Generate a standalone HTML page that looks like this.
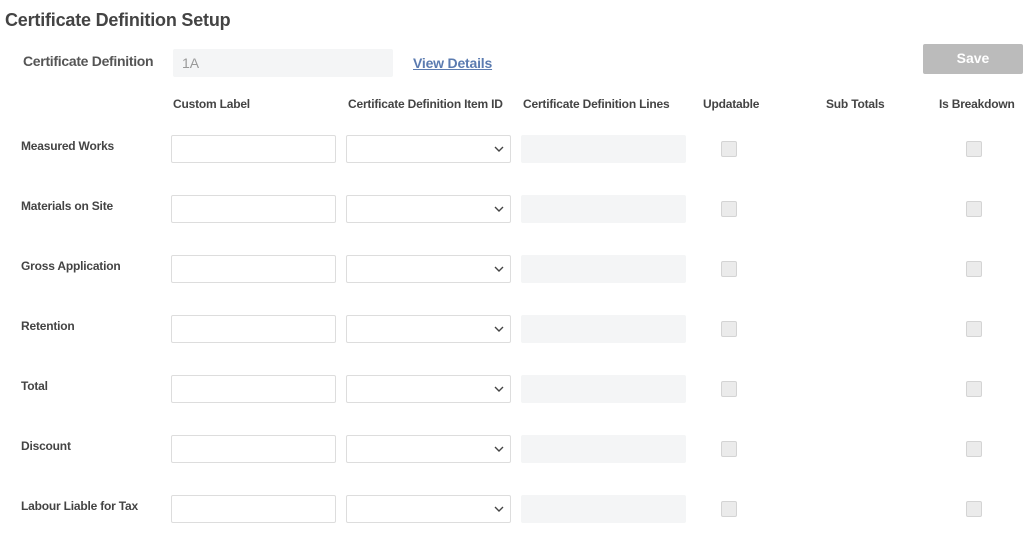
<!DOCTYPE html>
<html><head><style>
body{margin:0;width:1034px;height:541px;background:#fff;font-family:"Liberation Sans",sans-serif;color:#444;position:relative;overflow:hidden}
.a{position:absolute}
.t{font-size:18px;font-weight:bold;left:5px;top:10px;color:#444;letter-spacing:-0.2px}
.h{font-size:12px;font-weight:bold;top:97px;color:#444;white-space:nowrap;letter-spacing:-0.2px}
.l{font-size:12px;font-weight:bold;left:21px;color:#444;white-space:nowrap;letter-spacing:-0.2px}
.in{width:163px;height:26px;border:1px solid #ddd;border-radius:2px;background:#fff}
.ln{width:165px;height:28px;background:#f4f5f6;border-radius:2px}
.cb{width:14px;height:14px;border:1px solid #d4d4d4;background:#ebebeb;border-radius:2px}
.chev{position:absolute;right:6px;top:9px}
</style></head><body>
<div class="a t">Certificate Definition Setup</div>
<div class="a" style="left:23px;top:53px;font-size:14px;font-weight:bold;color:#555;letter-spacing:-0.3px">Certificate Definition</div>
<div class="a" style="left:173px;top:49px;width:220px;height:28px;background:#f4f5f6;border-radius:2px"><span style="position:absolute;left:9px;top:6px;font-size:14px;color:#999">1A</span></div>
<div class="a" style="left:413px;top:55px;font-size:14px;font-weight:bold;color:#5b7bb0;text-decoration:underline;letter-spacing:-0.2px">View Details</div>
<div class="a" style="left:923px;top:44px;width:100px;height:30px;background:#bbb;border-radius:2px;color:#fff;font-size:14px;font-weight:bold;text-align:center;line-height:28px">Save</div>
<div class="a h" style="left:173px">Custom Label</div>
<div class="a h" style="left:348px">Certificate Definition Item ID</div>
<div class="a h" style="left:523px">Certificate Definition Lines</div>
<div class="a h" style="left:703px">Updatable</div>
<div class="a h" style="left:826px">Sub Totals</div>
<div class="a h" style="left:939px">Is Breakdown</div>
<div id="rows"></div>
<script>
var n=["Measured Works","Materials on Site","Gross Application","Retention","Total","Discount","Labour Liable for Tax"],h="";
n.forEach(function(s,i){var y=135+i*60;
h+='<div class="a l" style="top:'+(y+4)+'px">'+s+'</div>'+
'<div class="a in" style="left:171px;top:'+y+'px"></div>'+
'<div class="a in" style="left:346px;top:'+y+'px"><svg class="chev" width="10" height="8" viewBox="0 0 10 8"><path d="M1 2l4 4 4-4" fill="none" stroke="#444" stroke-width="1.4"/></svg></div>'+
'<div class="a ln" style="left:521px;top:'+y+'px"></div>'+
'<div class="a cb" style="left:721px;top:'+(y+6)+'px"></div>'+
'<div class="a cb" style="left:966px;top:'+(y+6)+'px"></div>';});
document.getElementById("rows").innerHTML=h;
</script>
</body></html>
